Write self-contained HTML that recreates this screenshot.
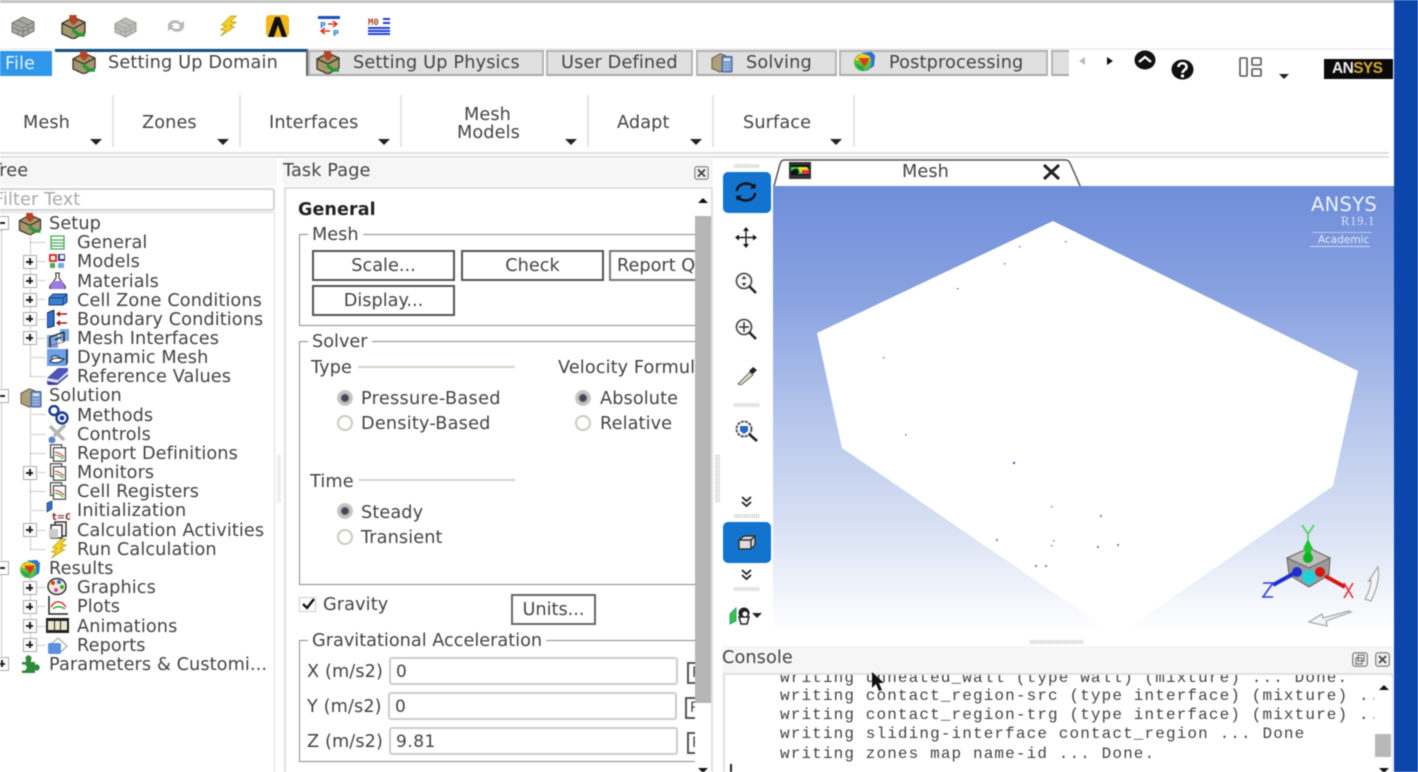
<!DOCTYPE html>
<html><head><meta charset="utf-8"><style>
html,body{margin:0;padding:0;background:#fff;overflow:hidden}
#r{position:relative;width:1418px;height:772px;overflow:hidden;background:#fff;filter:blur(.55px);font-family:"DejaVu Sans","Liberation Sans",sans-serif;color:#444}
#r div,#r svg,#r span{position:absolute;box-sizing:border-box}
.t{white-space:nowrap;font-size:17.7px;line-height:20px;height:20px;color:#444;margin-top:1px;letter-spacing:.1px}
.tab{background:#e0e0e0;border:2px solid #b4b4b4;border-bottom:2px solid #a8a8a8;height:26px;top:50px}
.sep{width:2px;background:#e4e4e4;top:95px;height:52px}
.arr{width:0;height:0;border-left:6px solid transparent;border-right:6px solid transparent;border-top:6px solid #222}
.btn{border:2px solid #555;background:#fff;height:31px;text-align:center;line-height:29px;font-size:17.7px;color:#444;white-space:nowrap;overflow:hidden}
.fs{border:1.5px solid #8a8a8a}
.leg{background:#fff;padding:0 4px;white-space:nowrap;font-size:17.7px;line-height:20px;height:20px;color:#444;margin-top:1px}
.in{border:2px solid #ccc;border-radius:3px;background:#fff;height:28px;line-height:26px;padding-left:5px;font-size:17px;letter-spacing:.5px;color:#444}
.rad{width:16px;height:16px;border-radius:50%;border:2px solid #c8c8c4;background:#fff}
.on{background:radial-gradient(circle,#445 0 3px,#bbb 4.5px,#ccc 100%)}
.pl{width:14px;height:14px;border:1.5px solid #aaa;background:#fff}
.pl:before{content:"";position:absolute;left:2px;top:4.5px;width:7px;height:2px;background:#222}
.pp:after{content:"";position:absolute;left:4.5px;top:2px;width:2px;height:7px;background:#222}
.dv{border-left:1.5px dotted #999;width:0}
.dh{border-top:1.5px dotted #999;height:0}
.grp{width:26px;background:repeating-linear-gradient(90deg,#ccc 0 1px,#fff 1px 2px);height:4px}
.con{white-space:pre;font-family:"Liberation Mono","DejaVu Sans Mono",monospace;font-size:16px;letter-spacing:1.12px;line-height:19px;height:19px;color:#444}
.blue{background:#1274cf;border-radius:5px;left:723px;width:48px;height:41px}
</style></head><body><div id="r">
<svg width="0" height="0" style="left:0;top:0"><defs>
<symbol id="brick" viewBox="0 0 24 24"><path d="M1 9 12 3l11 5v9l-11 6-11-5z" fill="#a9a9a4" stroke="#77776f"/><path d="M1 9l11 5 11-6M12 14v9M1 13l11 5 11-6M6 6l11 5M7 16v5M17 13v6" fill="none" stroke="#7f7f78"/></symbol>
<symbol id="setup" viewBox="0 0 24 24"><path d="M1 9 12 3l11 5v10l-11 6-11-5z" fill="#a5976f" stroke="#3d3727" stroke-width="1.300"/><path d="M1 9l11 5 11-6" fill="none" stroke="#3d3727" stroke-width="1.300"/><path d="M8 1h7v4h3l-6 6-6-6h2z" fill="#b4452a"/><path d="M11 15l6 5 6 0" fill="none" stroke="#1f9a35" stroke-width="3.400"/></symbol>
<symbol id="sol" viewBox="0 0 24 24"><path d="M1 8 10 3l6 2v15l-6 3-9-4z" fill="#ae9f7a" stroke="#5b5542"/><rect x="12" y="6" width="11" height="17" rx="1" fill="#6f95c9" stroke="#3d5f8f"/><rect x="14" y="8" width="7" height="3" fill="#dce8f6"/><path d="M14 14h7M14 17h7M14 20h7" stroke="#e4eefa" stroke-dasharray="2 1"/></symbol>
<symbol id="res" viewBox="0 0 24 24"><path d="M9 2 20 1l4 4-1 12-9 6z" fill="#2a72d8"/><ellipse cx="10" cy="13" rx="10" ry="10" fill="#5fbf3f"/><path d="M2 8 9 3l9 3 1 5H2z" fill="#efd21c"/><path d="M5 8h13l-6 10z" fill="#dd3a17"/><path d="M1 14c2 5 6 8 11 9l-1-5z" fill="#25a84a"/></symbol>
<symbol id="bolt" viewBox="0 0 24 24"><path d="M15 1 5 11l5 1-6 4 5 1-5 6 15-10-5-1 7-4-6-1 6-6z" fill="#f6d21f" stroke="#a88b12" stroke-width=".7"/></symbol>
<symbol id="mon" viewBox="0 0 24 24"><rect x="2" y="1" width="15" height="17" fill="#fff" stroke="#444" stroke-width="1.600"/><rect x="6" y="5" width="16" height="18" fill="#fff" stroke="#444" stroke-width="1.600"/><path d="M8 11c4 0 7 2 12 6" fill="none" stroke="#d33" stroke-width="1.500"/><path d="M8 15c4 0 6 1 11 5" fill="none" stroke="#3a3" stroke-width="1.500"/></symbol>
</defs></svg>

<!-- top chrome -->
<div style="left:0;top:0;width:1394px;height:3px;background:#c4c4c4"></div>
<div style="left:1394px;top:0;width:24px;height:772px;background:#0c46ac"></div>
<svg style="left:11px;top:14px" width="24" height="24"><use href="#brick"/></svg>
<svg style="left:61px;top:14px" width="25" height="25"><use href="#setup"/></svg>
<svg style="left:113px;top:15px" width="25" height="23" viewBox="0 0 25 23"><use href="#brick" width="25" height="23" opacity=".75"/></svg>
<svg style="left:166px;top:17px" width="20" height="18" viewBox="0 0 20 18"><path d="M2 8c1-5 9-7 13-2l3-2v6h-6l2-2c-3-3-7-2-9 0zM18 10c-1 5-9 7-13 2l-3 2V8h6l-2 2c3 3 7 2 9 0z" fill="#b8b8b8"/></svg>
<svg style="left:217px;top:15px" width="22" height="22"><use href="#bolt"/></svg>
<svg style="left:266px;top:15px" width="23" height="22" viewBox="0 0 23 22"><rect width="23" height="22" rx="4" fill="#f2b61e"/><path d="M2 22 9 2h5l7 20h-5l-4-12-4 12z" fill="#111"/></svg>
<svg style="left:318px;top:16px" width="22" height="20" viewBox="0 0 22 20"><rect width="22" height="3" fill="#1f4fb8"/><text x="2" y="12" font-size="8" font-weight="700" fill="#2a7fd8" font-family="DejaVu Sans">P</text><text x="15" y="20" font-size="8" font-weight="700" fill="#2a7fd8" font-family="DejaVu Sans">P</text><path d="M10 8h8M15 5l4 3-4 3M12 15H4M7 12l-4 3 4 3" fill="none" stroke="#d8352a" stroke-width="1.500"/></svg>
<svg style="left:368px;top:17px" width="22" height="19" viewBox="0 0 22 19"><text x="0" y="8" font-size="9" font-weight="700" fill="#a84a2a" font-family="DejaVu Sans Mono">M0</text><path d="M15 2h7M15 6h7M0 11h22M0 14h22M0 17h22" stroke="#1f3fd0" stroke-width="2"/></svg>

<!-- tabs -->
<div style="left:0;top:48px;width:1394px;height:2px;background:#eee"></div>
<div style="left:0;top:51px;width:52px;height:25px;background:#2f96ea"></div>
<div class="t" style="left:5px;top:53px;color:#e4f2ff">File</div>
<div style="left:55px;top:49px;width:253px;height:3px;background:#14507f"></div>
<div style="left:306px;top:50px;width:2px;height:26px;background:#666"></div>
<svg style="left:72px;top:50px" width="24" height="24"><use href="#setup"/></svg>
<div class="t" style="left:108px;top:52px;letter-spacing:.15px">Setting Up Domain</div>
<div class="tab" style="left:308px;width:236px"></div>
<svg style="left:316px;top:50px" width="24" height="24"><use href="#setup"/></svg>
<div class="t" style="left:353px;top:52px;letter-spacing:.15px">Setting Up Physics</div>
<div class="tab" style="left:546px;width:147px"></div>
<div class="t" style="left:561px;top:52px;letter-spacing:.15px">User Defined</div>
<div class="tab" style="left:696px;width:141px"></div>
<svg style="left:710px;top:51px" width="24" height="22"><use href="#sol"/></svg>
<div class="t" style="left:746px;top:52px;letter-spacing:.15px">Solving</div>
<div class="tab" style="left:839px;width:209px"></div>
<svg style="left:853px;top:51px" width="23" height="21"><use href="#res"/></svg>
<div class="t" style="left:889px;top:52px;letter-spacing:.15px">Postprocessing</div>
<div class="tab" style="left:1051px;width:18px;border-right:0"></div>
<div style="left:1079px;top:57px;border:4px solid transparent;border-right:6px solid #bbb;border-left:0;width:0;height:0"></div>
<div style="left:1107px;top:57px;border:4px solid transparent;border-left:6px solid #111;border-right:0;width:0;height:0"></div>
<svg style="left:1134px;top:50px" width="22" height="20" viewBox="0 0 22 20"><ellipse cx="11" cy="10" rx="10.500" ry="9.500" fill="#111"/><path d="M5 12l6-5 6 5" fill="none" stroke="#fff" stroke-width="2.400"/></svg>
<svg style="left:1171px;top:59px" width="23" height="21" viewBox="0 0 23 21"><ellipse cx="11.500" cy="10.500" rx="11" ry="10" fill="#111"/><path d="M7.500 8c0-5 8-5 8 0 0 3-4 3-4 6" fill="none" stroke="#fff" stroke-width="2.600"/><rect x="10" y="15.500" width="3" height="3" fill="#fff"/></svg>
<svg style="left:1239px;top:56px" width="23" height="22" viewBox="0 0 23 22" fill="none" stroke="#555" stroke-width="1.600"><rect x="1" y="2" width="7" height="18" rx="1"/><rect x="13" y="2" width="9" height="7" rx="1"/><rect x="13" y="13" width="9" height="7" rx="1"/></svg>
<div class="arr" style="left:1279px;top:74px;border-left-width:5px;border-right-width:5px;border-top-width:5px"></div>
<div style="left:1324px;top:59px;width:69px;height:20px;background:#0a0a0a;overflow:hidden"><span style="left:8px;top:1px;font:700 15.500px/18px 'Liberation Sans',sans-serif;letter-spacing:-.6px;color:#eee;white-space:nowrap">AN<span style="position:static;color:#d7a92f">SYS</span></span></div>

<!-- ribbon -->
<div class="t" style="left:23px;top:112px">Mesh</div><div class="arr" style="left:90px;top:139px"></div><div class="sep" style="left:112px"></div>
<div class="t" style="left:142px;top:112px">Zones</div><div class="arr" style="left:217px;top:139px"></div><div class="sep" style="left:239px"></div>
<div class="t" style="left:269px;top:112px">Interfaces</div><div class="arr" style="left:378px;top:139px"></div><div class="sep" style="left:400px"></div>
<div class="t" style="left:464px;top:104px">Mesh</div><div class="t" style="left:457px;top:122px">Models</div><div class="arr" style="left:565px;top:139px"></div><div class="sep" style="left:587px"></div>
<div class="t" style="left:617px;top:112px">Adapt</div><div class="arr" style="left:690px;top:139px"></div><div class="sep" style="left:712px"></div>
<div class="t" style="left:743px;top:112px">Surface</div><div class="arr" style="left:830px;top:139px"></div><div class="sep" style="left:853px"></div>
<div style="left:0;top:152px;width:1389px;height:6px;border-top:2px solid #e0e0e0;border-bottom:2px solid #e0e0e0"></div>

<!-- tree -->
<div style="left:0;top:159px;width:277px;height:27px;background:#f6f6f6"></div>
<div class="t" style="left:-9px;top:160px">Tree</div>
<div style="left:-6px;top:188px;width:281px;height:23px;border:2px solid #d4d4d4;border-radius:3px;background:#fff"></div>
<div class="t" style="left:-6px;top:189px;color:#aaa">Filter Text</div>
<div style="left:274px;top:212px;width:1px;height:560px;background:#ddd"></div>
<div style="left:0;top:212px;width:275px;height:1px;background:#ddd"></div>
<div class="dv" style="left:1px;top:230px;height:434px"></div>
<div class="dv" style="left:30px;top:232px;height:144px"></div>
<div class="dv" style="left:30px;top:405px;height:144px"></div>
<div class="dv" style="left:30px;top:578px;height:68px"></div>
<div class="dh" style="left:30px;top:242px;width:15px"></div><div class="dh" style="left:36px;top:261px;width:9px"></div><div class="dh" style="left:36px;top:280px;width:9px"></div><div class="dh" style="left:36px;top:299px;width:9px"></div><div class="dh" style="left:36px;top:319px;width:9px"></div><div class="dh" style="left:36px;top:338px;width:9px"></div><div class="dh" style="left:30px;top:357px;width:15px"></div><div class="dh" style="left:30px;top:376px;width:15px"></div>
<div class="dh" style="left:30px;top:414px;width:15px"></div><div class="dh" style="left:30px;top:434px;width:15px"></div><div class="dh" style="left:30px;top:453px;width:15px"></div><div class="dh" style="left:36px;top:472px;width:9px"></div><div class="dh" style="left:30px;top:491px;width:15px"></div><div class="dh" style="left:30px;top:510px;width:15px"></div><div class="dh" style="left:36px;top:530px;width:9px"></div><div class="dh" style="left:30px;top:549px;width:15px"></div>
<div class="dh" style="left:36px;top:587px;width:9px"></div><div class="dh" style="left:36px;top:606px;width:9px"></div><div class="dh" style="left:36px;top:626px;width:9px"></div><div class="dh" style="left:36px;top:645px;width:9px"></div>

<div class="pl" style="left:-5px;top:216px"></div><div class="pl" style="left:-5px;top:389px"></div><div class="pl" style="left:-5px;top:561px"></div><div class="pl pp" style="left:-5px;top:657px"></div>
<div class="pl pp" style="left:23px;top:255px"></div><div class="pl pp" style="left:23px;top:274px"></div><div class="pl pp" style="left:23px;top:293px"></div><div class="pl pp" style="left:23px;top:312px"></div><div class="pl pp" style="left:23px;top:331px"></div><div class="pl pp" style="left:23px;top:466px"></div><div class="pl pp" style="left:23px;top:523px"></div><div class="pl pp" style="left:23px;top:581px"></div><div class="pl pp" style="left:23px;top:600px"></div><div class="pl pp" style="left:23px;top:619px"></div><div class="pl pp" style="left:23px;top:638px"></div>

<svg style="left:18px;top:212px" width="24" height="23"><use href="#setup"/></svg>
<svg style="left:19px;top:386px" width="24" height="22"><use href="#sol"/></svg>
<svg style="left:19px;top:559px" width="22" height="20"><use href="#res"/></svg>
<svg style="left:19px;top:655px" width="22" height="19" viewBox="0 0 22 19"><path d="M3 7h4V5a3 3 0 1 1 5 0v2h4v3a3 3 0 1 1 0 5v3H3v-3a3 3 0 1 0 0-5z" fill="#2f8a3a"/></svg>
<svg style="left:50px;top:235px" width="15" height="15" viewBox="0 0 15 15" fill="#fff" stroke="#4aaa5a" stroke-width="1.300"><rect x="1" y="1" width="13" height="13"/><path d="M1 5h13M1 8h13M1 11h13"/></svg>
<svg style="left:49px;top:254px" width="16" height="15" viewBox="0 0 16 15"><rect x="1" y="1" width="6" height="6" fill="#fff" stroke="#d8352a" stroke-width="2"/><rect x="10" y="0" width="6" height="6" fill="#fff" stroke="#34348a" stroke-width="2"/><rect x="1" y="9" width="5" height="5" fill="#4aaa5a"/><rect x="9" y="9" width="6" height="5" fill="#79a8e0"/></svg>
<svg style="left:49px;top:272px" width="17" height="17" viewBox="0 0 17 17"><path d="M6 1h5M7 1v5l-6 8c-1 2 0 3 2 3h11c2 0 3-1 2-3l-6-8V1" fill="#fff" stroke="#333" stroke-width="1.100"/><path d="M4 9h9l3 6-1 2H2l-1-2z" fill="#9c7ae0"/></svg>
<svg style="left:48px;top:293px" width="20" height="13" viewBox="0 0 20 13"><path d="M1 5 5 1h14v8l-4 3H1z" fill="#3b7fd4" stroke="#1f3f7a"/><path d="M1 5h14v7M15 5l4-4" fill="none" stroke="#1f3f7a"/></svg>
<svg style="left:47px;top:310px" width="21" height="18" viewBox="0 0 21 18"><path d="M0 3 7 0v16l-7 2z" fill="#2f6fd1" stroke="#123"/><path d="M20 4H12M20 13H12" stroke="#a01818" stroke-width="1.500"/><path d="M13 1l-4 3 4 3zM13 10l-4 3 4 3z" fill="#a01818"/></svg>
<svg style="left:47px;top:329px" width="22" height="19" viewBox="0 0 22 19"><rect x="0" y="6" width="11" height="13" fill="#7aa6e0"/><rect x="13" y="0" width="9" height="12" fill="#7aa6e0"/><path d="M3 8v10M3 8l14-5M17 3v10M8 11l6-3" fill="none" stroke="#222" stroke-width="1.400"/><path d="M3 17l6-2 8-2" stroke="#a33" fill="none" stroke-dasharray="2 1"/></svg>
<svg style="left:47px;top:349px" width="21" height="17" viewBox="0 0 21 17"><rect width="19" height="17" y="0" fill="#6e9fe4"/><path d="M19 0l2 0v14l-2 3z" fill="#345"/><path d="M4 9c2-3 6-3 9 0M3 12c4 3 10 2 14-2l-7-1c-2 0-5 1-7 3z" fill="#fff" stroke="#123"/></svg>
<svg style="left:47px;top:368px" width="21" height="17" viewBox="0 0 21 17"><path d="M0 10 11 0h10v5L10 15 0 16z" fill="#4f53b5"/><path d="M0 10l11 2 10-9v3L10 15 0 13z" fill="#dfe3f6"/><path d="M0 13l10 2 11-9v2L10 17H1z" fill="#3d41a0"/></svg>
<svg style="left:48px;top:405px" width="21" height="20" viewBox="0 0 21 20" fill="#fff" stroke="#1c3c90" stroke-width="2.400"><circle cx="6" cy="5.500" r="4.500"/><circle cx="14" cy="13" r="5.500"/><circle cx="14" cy="13" r="1.200" fill="#1c3c90"/></svg>
<svg style="left:48px;top:424px" width="20" height="19" viewBox="0 0 20 19"><path d="M2 2l14 14M17 1 6 12" stroke="#b4b4b4" stroke-width="3.500"/><circle cx="4" cy="16" r="3.500" fill="#5b86c8"/></svg>
<svg style="left:49px;top:444px" width="18" height="18"><use href="#mon"/></svg>
<svg style="left:49px;top:463px" width="18" height="18"><use href="#mon"/></svg>
<svg style="left:49px;top:482px" width="18" height="18"><use href="#mon"/></svg>
<svg style="left:46px;top:500px" width="24" height="21" viewBox="0 0 24 21"><path d="M1 3l5-2v8l-5 3z" fill="#2f6fd1" stroke="#123" stroke-width=".6"/><text x="6" y="20" font-size="10" font-weight="700" fill="#8c3a3a" font-family="DejaVu Sans">t=0</text></svg>
<svg style="left:48px;top:521px" width="19" height="18" viewBox="0 0 19 18" fill="#fff" stroke="#333" stroke-width="1.500"><rect x="7" y="1" width="11" height="14"/><rect x="3" y="4" width="11" height="13"/><rect x="1" y="8" width="9" height="9" fill="#ccc" stroke="none"/></svg>
<svg style="left:48px;top:538px" width="21" height="21"><use href="#bolt"/></svg>
<svg style="left:47px;top:577px" width="20" height="19" viewBox="0 0 20 19"><ellipse cx="10" cy="9.500" rx="9" ry="8" fill="#f2ecd0" stroke="#333" stroke-width="1.500"/><circle cx="6" cy="6" r="2" fill="#d8352a"/><circle cx="12" cy="5" r="2" fill="#2f6fd1"/><circle cx="15" cy="10" r="2" fill="#3a3"/><circle cx="9" cy="13" r="2" fill="#e040c0"/></svg>
<svg style="left:47px;top:596px" width="22" height="20" viewBox="0 0 22 20" fill="none"><path d="M2 0v18h19" stroke="#222" stroke-width="1.500"/><path d="M4 11c4-7 10-7 15 0" stroke="#d33" stroke-width="1.500"/><path d="M6 13c3-3 8-3 12 0" stroke="#3a3" stroke-width="1.500"/></svg>
<svg style="left:46px;top:618px" width="23" height="15" viewBox="0 0 23 15"><rect width="23" height="15" fill="#222"/><rect x="2" y="3" width="6" height="9" fill="#ece6cf"/><rect x="9" y="3" width="5" height="9" fill="#ece6cf"/><rect x="15" y="3" width="6" height="9" fill="#ece6cf"/></svg>
<svg style="left:47px;top:637px" width="21" height="17" viewBox="0 0 21 17"><path d="M4 7l7-6 9 8-7 7" fill="#fff" stroke="#999"/><rect x="1" y="6" width="13" height="11" rx="2" fill="#5b92e0"/></svg>

<div class="t" style="left:49px;top:213px">Setup</div>
<div class="t" style="left:77px;top:232px">General</div>
<div class="t" style="left:77px;top:251px">Models</div>
<div class="t" style="left:77px;top:271px">Materials</div>
<div class="t" style="left:77px;top:290px">Cell Zone Conditions</div>
<div class="t" style="left:77px;top:309px">Boundary Conditions</div>
<div class="t" style="left:77px;top:328px">Mesh Interfaces</div>
<div class="t" style="left:77px;top:347px">Dynamic Mesh</div>
<div class="t" style="left:77px;top:366px">Reference Values</div>
<div class="t" style="left:49px;top:385px">Solution</div>
<div class="t" style="left:77px;top:405px">Methods</div>
<div class="t" style="left:77px;top:424px">Controls</div>
<div class="t" style="left:77px;top:443px">Report Definitions</div>
<div class="t" style="left:77px;top:462px">Monitors</div>
<div class="t" style="left:77px;top:481px">Cell Registers</div>
<div class="t" style="left:77px;top:500px">Initialization</div>
<div class="t" style="left:77px;top:520px">Calculation Activities</div>
<div class="t" style="left:77px;top:539px">Run Calculation</div>
<div class="t" style="left:49px;top:558px">Results</div>
<div class="t" style="left:77px;top:577px">Graphics</div>
<div class="t" style="left:77px;top:596px">Plots</div>
<div class="t" style="left:77px;top:616px">Animations</div>
<div class="t" style="left:77px;top:635px">Reports</div>
<div class="t" style="left:49px;top:654px">Parameters &amp; Customi...</div>
<div style="left:277px;top:455px;width:4px;height:48px;background:repeating-linear-gradient(#ddd 0 1px,#fff 1px 2px)"></div>

<!-- task page -->
<div style="left:283px;top:159px;width:430px;height:27px;background:#f6f6f6"></div>
<div class="t" style="left:283px;top:160px">Task Page</div>
<svg style="left:694px;top:166px" width="15" height="14" viewBox="0 0 15 14"><rect x=".8" y=".8" width="13.400" height="12.400" rx="2" fill="#eee" stroke="#777"/><path d="M4 3.500l7 7M11 3.500l-7 7" stroke="#444" stroke-width="1.800"/></svg>
<div style="left:284px;top:187px;width:429px;height:585px;border:2px solid #e0e0e0;border-bottom:0;background:#fff"></div>
<div class="t" style="left:298px;top:199px;font-weight:700;color:#222;font-size:17.500px">General</div>
<div class="fs" style="left:299px;top:234px;width:420px;height:92px"></div>
<div class="leg" style="left:308px;top:224px">Mesh</div>
<div class="btn" style="left:312px;top:250px;width:143px">Scale...</div>
<div class="btn" style="left:461px;top:250px;width:143px">Check</div>
<div class="btn" style="left:609px;top:250px;width:100px;text-align:left;padding-left:6px;border-color:#777">Report Quality</div>
<div class="btn" style="left:312px;top:285px;width:143px">Display...</div>
<div class="fs" style="left:299px;top:341px;width:420px;height:244px"></div>
<div class="leg" style="left:308px;top:331px">Solver</div>
<div class="t" style="left:311px;top:357px">Type</div><div style="left:358px;top:366px;width:157px;height:2px;background:#d6d2ca"></div>
<div class="t" style="left:558px;top:357px;width:150px;overflow:hidden">Velocity Formulation</div>
<div class="rad on" style="left:337px;top:390px"></div><div class="t" style="left:361px;top:388px;letter-spacing:.3px">Pressure-Based</div>
<div class="rad" style="left:337px;top:415px"></div><div class="t" style="left:361px;top:413px;letter-spacing:.2px">Density-Based</div>
<div class="rad on" style="left:575px;top:390px"></div><div class="t" style="left:600px;top:388px">Absolute</div>
<div class="rad" style="left:575px;top:415px"></div><div class="t" style="left:600px;top:413px">Relative</div>
<div class="t" style="left:310px;top:471px">Time</div><div style="left:359px;top:479px;width:156px;height:2px;background:#d6d2ca"></div>
<div class="rad on" style="left:337px;top:503px"></div><div class="t" style="left:361px;top:502px">Steady</div>
<div class="rad" style="left:337px;top:529px"></div><div class="t" style="left:361px;top:527px">Transient</div>
<div style="left:299px;top:597px;width:17px;height:15px;border:1.500px solid #ccc;background:#fff"></div>
<svg style="left:301px;top:597px" width="15" height="14" viewBox="0 0 15 14"><path d="M2 7l4 4 7-9" fill="none" stroke="#111" stroke-width="2.400"/></svg>
<div class="t" style="left:323px;top:594px">Gravity</div>
<div class="btn" style="left:511px;top:594px;width:85px;border-color:#666">Units...</div>
<div class="fs" style="left:299px;top:640px;width:420px;height:122px"></div>
<div class="leg" style="left:308px;top:630px">Gravitational Acceleration</div>
<div class="t" style="left:307px;top:661px">X (m/s2)</div><div class="in" style="left:389px;top:657px;width:289px">0</div><div class="btn" style="left:687px;top:662px;width:24px;height:22px;line-height:18px;text-align:left;padding-left:3px;font-size:14px">P</div>
<div class="t" style="left:307px;top:696px">Y (m/s2)</div><div class="in" style="left:388px;top:692px;width:289px">0</div><div class="btn" style="left:685px;top:697px;width:24px;height:22px;line-height:18px;text-align:left;padding-left:3px;font-size:14px">P</div>
<div class="t" style="left:307px;top:731px">Z (m/s2)</div><div class="in" style="left:389px;top:727px;width:289px">9.81</div><div class="btn" style="left:687px;top:732px;width:24px;height:22px;line-height:18px;text-align:left;padding-left:3px;font-size:14px">P</div>
<div style="left:695px;top:189px;width:27px;height:583px;background:#fff"></div>
<div style="left:711px;top:187px;width:2px;height:585px;background:#e0e0e0"></div>
<div style="left:695px;top:216px;width:16px;height:487px;background:#b6b6b6"></div>
<div style="left:698px;top:198px;border:5px solid transparent;border-bottom:5px solid #111;border-top:0;width:0;height:0"></div>
<div style="left:698px;top:768px;border:5px solid transparent;border-top:5px solid #111;border-bottom:0;width:0;height:0"></div>
<div style="left:715px;top:455px;width:5px;height:48px;background:repeating-linear-gradient(#ccc 0 1px,#fff 1px 2px)"></div>

<!-- graphics toolbar -->
<div class="grp" style="left:734px;top:164px"></div><div class="grp" style="left:734px;top:403px"></div><div class="grp" style="left:734px;top:514px"></div><div class="grp" style="left:734px;top:587px"></div>
<div class="blue" style="top:172px"></div>
<svg style="left:735px;top:181px" width="22" height="22" viewBox="0 0 22 22" fill="none" stroke="#111" stroke-width="2.400"><path d="M2 10c0-8 13-10 17-4"/><path d="M20 12c0 8-13 10-17 4"/><path d="M15 8l6-1-1-5z" fill="#111" stroke="none"/><path d="M7 14l-6 1 1 5z" fill="#111" stroke="none"/></svg>
<svg style="left:735px;top:227px" width="22" height="21" viewBox="0 0 22 21"><path d="M11 2v17M2 10.500h18" stroke="#222" stroke-width="1.400"/><path d="M11 0l-3 4h6zM11 21l-3-4h6zM0 10.500l4-3v6zM22 10.500l-4-3v6z" fill="#111"/></svg>
<svg style="left:735px;top:272px" width="22" height="22" viewBox="0 0 22 22"><circle cx="9" cy="9" r="7.500" fill="#fff" stroke="#555" stroke-width="1.800"/><path d="M14 14l7 7" stroke="#222" stroke-width="2.600"/><path d="M9 4l-2.500 3h5zM9 14l-2.500-3h5z" fill="#333"/></svg>
<svg style="left:735px;top:318px" width="22" height="22" viewBox="0 0 22 22"><circle cx="9" cy="9" r="7.500" fill="#fff" stroke="#555" stroke-width="1.800"/><path d="M14 14l7 7" stroke="#222" stroke-width="2.600"/><path d="M4 9h10M9 4v10" stroke="#333" stroke-width="1.500"/></svg>
<svg style="left:736px;top:366px" width="22" height="20" viewBox="0 0 22 20"><path d="M2 18 14 6l3 3L5 19z" fill="#e4dcc4" stroke="#666"/><path d="M13 5l4-4 4 3-3 3-1 1z" fill="#222"/></svg>
<svg style="left:735px;top:420px" width="23" height="22" viewBox="0 0 23 22"><circle cx="9" cy="9" r="7.500" fill="#fff" stroke="#555" stroke-width="2" stroke-dasharray="3 1"/><path d="M14 14l8 7" stroke="#222" stroke-width="2.600"/><path d="M5 6h8v5l-4 3-4-3z" fill="#2a68c8"/></svg>
<svg style="left:741px;top:496px" width="11" height="12" viewBox="0 0 11 12" fill="none" stroke="#222" stroke-width="1.800"><path d="M1 1l4.500 4L10 1M1 6l4.500 4L10 6"/></svg>
<div class="blue" style="top:522px"></div>
<svg style="left:738px;top:535px" width="18" height="15" viewBox="0 0 18 15"><path d="M1 5 6 1h11v9l-4 4H1z" fill="#ddd" stroke="#333" stroke-width="1.500"/><path d="M1 5h12v9M13 5l4-4" fill="none" stroke="#333" stroke-width="1.500"/></svg>
<svg style="left:741px;top:569px" width="11" height="12" viewBox="0 0 11 12" fill="none" stroke="#222" stroke-width="1.800"><path d="M1 1l4.500 4L10 1M1 6l4.500 4L10 6"/></svg>
<svg style="left:729px;top:606px" width="35" height="19" viewBox="0 0 35 19"><path d="M1 8l6-6v13l-6 3z" fill="#3fbf4a" stroke="#2a7"/><circle cx="15" cy="7" r="5.500" fill="#222"/><path d="M10 11h10l-2 7h-6z" fill="#fff" stroke="#222" stroke-width="1.500"/><circle cx="16" cy="8" r="2.500" fill="#fff"/><path d="M23 7h10l-5 5z" fill="#222"/></svg>

<!-- viewport tab -->
<svg style="left:773px;top:158px" width="312" height="30" viewBox="0 0 312 30"><path d="M1 28 7 6c1-3 2-4 5-4h280c3 0 4 1 5 3l11 25" fill="#fff" stroke="#555" stroke-width="1.500"/></svg>
<svg style="left:789px;top:162px" width="22" height="17" viewBox="0 0 22 17"><rect width="22" height="17" fill="#333"/><rect x="2" y="3" width="18" height="10" fill="#111"/><path d="M2 5h16l2 3v4H9c2-3 0-6-3-5L2 9z" fill="#2fd04a"/><path d="M9 5h9l2 3v2H11z" fill="#e8e020"/><path d="M13 8h7v4h-7z" fill="#e8304a"/><circle cx="6" cy="9" r="2" fill="#111"/></svg>
<div class="t" style="left:902px;top:161px">Mesh</div>
<svg style="left:1042px;top:164px" width="19" height="16" viewBox="0 0 19 16"><path d="M2 1l15 14M17 1 2 15" stroke="#222" stroke-width="3"/></svg>

<!-- viewport -->
<div style="left:773px;top:186px;width:621px;height:454px;background:linear-gradient(#6e8dda 0,#8aa3e1 25%,#b7c7ec 52%,#d8e1f4 75%,#fff 98%)"></div>
<svg style="left:773px;top:186px" width="621" height="454" viewBox="773 186 621 454"><polygon points="1053,221 1358,371 1333,486 1117,636 842,448 817,333" fill="#fff"/>
<g fill="#7a7ac8"><rect x="1019" y="246" width="1.500" height="1.500"/><rect x="1065" y="241" width="1.500" height="1.500"/><rect x="1004" y="263" width="1.500" height="1.500"/><rect x="957" y="288" width="1.500" height="1.500"/><rect x="883" y="357" width="1.500" height="1.500"/><rect x="905" y="434" width="1.500" height="1.500"/><rect x="1013" y="462" width="2" height="2" fill="#44a"/><rect x="1051" y="506" width="1.500" height="1.500"/><rect x="1100" y="515" width="2" height="2"/><rect x="1053" y="540" width="1.500" height="1.500"/><rect x="1051" y="545" width="1.500" height="1.500"/><rect x="996" y="539" width="2" height="2"/><rect x="1097" y="546" width="2" height="2"/><rect x="1117" y="544" width="2" height="2"/><rect x="1035" y="565" width="2" height="2"/><rect x="1045" y="565" width="2" height="2"/></g></svg>
<div style="left:1311px;top:195px;color:#eef2fb;font:19.500px/20px 'DejaVu Sans',sans-serif;letter-spacing:.3px;white-space:nowrap">ANSYS</div>
<div style="left:1341px;top:214px;color:#d7e0f4;font:12.500px/14px 'Liberation Serif',serif;letter-spacing:.8px;white-space:nowrap">R19.1</div>
<div style="left:1312px;top:232px;width:60px;height:1px;background:#b8c8ec"></div>
<div style="left:1318px;top:233px;color:#e2e9f8;font:10.500px/14px 'DejaVu Sans',sans-serif;white-space:nowrap">Academic</div>
<div style="left:1310px;top:246px;width:60px;height:1px;background:#d0dcf4"></div>
<svg style="left:1258px;top:522px" width="128" height="112" viewBox="0 0 128 112">
<path d="M29 36 51 26 72 36 71 53 51 65 31 53z" fill="#9a9a9a" stroke="#666"/><path d="M29 36 51 26 72 36 51 46z" fill="#bdbdbd" stroke="#666"/>
<path d="M35 52 15 63" stroke="#1f2fd0" stroke-width="4"/><path d="M67 54 87 65" stroke="#d41818" stroke-width="4"/>
<path d="M50 25v13" stroke="#17c52a" stroke-width="6"/><path d="M50 17l-5 10h10z" fill="#17c52a"/>
<circle cx="50" cy="36" r="5" fill="#12b020"/><circle cx="39" cy="50" r="5" fill="#1f2fd0"/><circle cx="62" cy="50" r="5" fill="#d41818"/><circle cx="51" cy="55" r="7" fill="#22d0da"/>
<path d="M44 3l6 9 6-9M50 12v6" fill="none" stroke="#4ad65a" stroke-width="1.600"/>
<path d="M5 61h10L5 75h10" fill="none" stroke="#2c3ce0" stroke-width="1.600"/>
<path d="M86 61l9 15M95 61 86 76" stroke="#e83030" stroke-width="1.600"/>
<path d="M120 45c2 12-2 24-7 34l-6-2c4-7 6-13 6-19l-3 2z" fill="#f4f5f8" stroke="#aaa" stroke-width="1.300"/>
<path d="M93 90 68 99l1 5-18-4 13-8 1 4 26-7z" fill="#f4f5f8" stroke="#aaa" stroke-width="1.300"/>
</svg>
<div style="left:1030px;top:640px;width:54px;height:4px;background:repeating-linear-gradient(90deg,#ccc 0 1px,#fff 1px 2px)"></div>

<!-- console -->
<div style="left:722px;top:646px;width:672px;height:27px;background:#f6f6f6"></div>
<div class="t" style="left:722px;top:647px">Console</div>
<svg style="left:1352px;top:652px" width="16" height="15" viewBox="0 0 16 15" fill="none" stroke="#666"><rect x=".7" y=".7" width="14.600" height="13.600" rx="2.500" fill="#eee"/><rect x="6" y="3" width="6" height="6"/><rect x="4" y="6" width="6" height="6"/></svg>
<svg style="left:1375px;top:652px" width="15" height="15" viewBox="0 0 15 15"><rect x=".7" y=".7" width="13.600" height="13.600" rx="2.500" fill="#eee" stroke="#666"/><path d="M4 4l7 7M11 4l-7 7" stroke="#444" stroke-width="1.800"/></svg>
<div style="left:723px;top:673px;width:670px;height:99px;border:2px solid #e0e0e0;border-bottom:0;background:#fff;overflow:hidden"></div>
<div style="left:725px;top:675px;width:667px;height:97px;overflow:hidden">
<div class="con" style="left:55px;top:-6px">writing unheated_wall (type wall) (mixture) ... Done.</div>
<div class="con" style="left:55px;top:12px">writing contact_region-src (type interface) (mixture) ..</div>
<div class="con" style="left:55px;top:31px">writing contact_region-trg (type interface) (mixture) ..</div>
<div class="con" style="left:55px;top:50px">writing sliding-interface contact_region ... Done</div>
<div class="con" style="left:55px;top:70px">writing zones map name-id ... Done.</div>
<div style="left:5px;top:89px;width:1.500px;height:12px;background:#222"></div>
</div>
<div style="left:1374px;top:676px;width:18px;height:96px;background:#fff"></div>
<div style="left:1375px;top:734px;width:16px;height:23px;background:#b8b8b8"></div>
<div style="left:1379px;top:685px;border:5px solid transparent;border-bottom:5px solid #111;border-top:0;width:0;height:0"></div>
<div style="left:1379px;top:768px;border:5px solid transparent;border-top:5px solid #111;border-bottom:0;width:0;height:0"></div>
<svg style="left:871px;top:672px" width="13" height="20" viewBox="0 0 13 20"><path d="M1 0v16l4-4 3 7 3-1-3-7h5z" fill="#111"/></svg>
</div></body></html>
